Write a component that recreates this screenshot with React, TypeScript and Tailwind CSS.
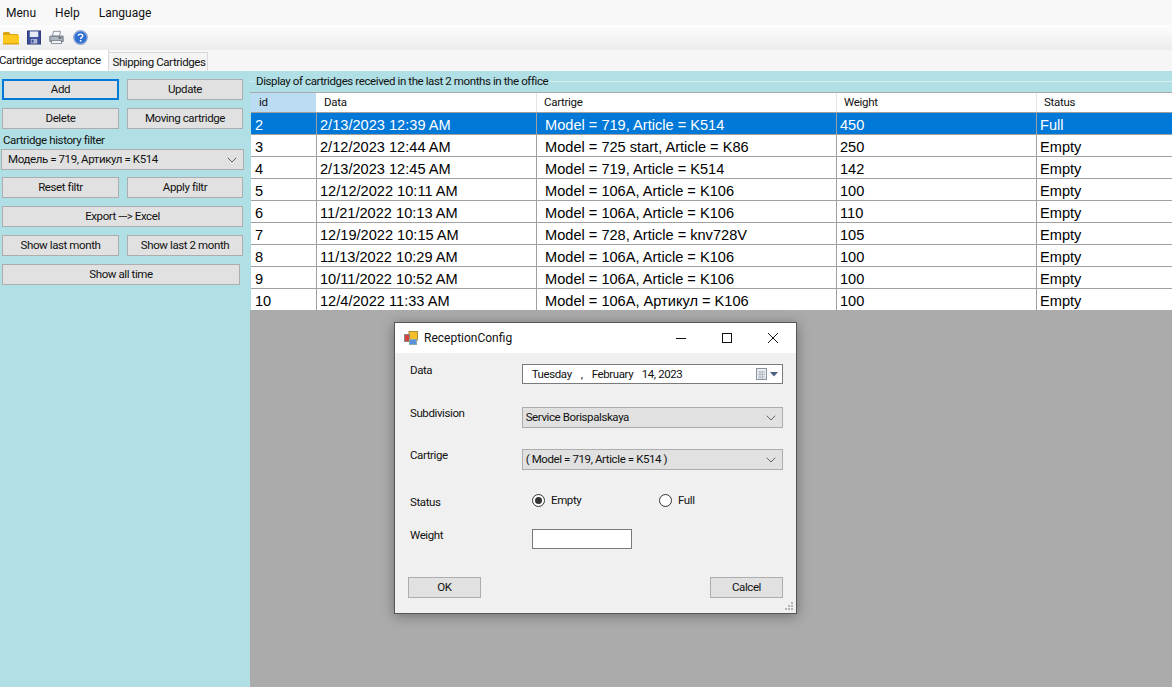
import { ChevronDown } from 'lucide-react';

const SEGOE = 'font-["Roboto","Open_Sans",sans-serif]';

const ROWS = [
  ['2', '2/13/2023 12:39 AM', 'Model = 719, Article = K514', '450', 'Full'],
  ['3', '2/12/2023 12:44 AM', 'Model = 725 start, Article = K86', '250', 'Empty'],
  ['4', '2/13/2023 12:45 AM', 'Model = 719, Article = K514', '142', 'Empty'],
  ['5', '12/12/2022 10:11 AM', 'Model = 106A, Article = K106', '100', 'Empty'],
  ['6', '11/21/2022 10:13 AM', 'Model = 106A, Article = K106', '110', 'Empty'],
  ['7', '12/19/2022 10:15 AM', 'Model = 728, Article = knv728V', '105', 'Empty'],
  ['8', '11/13/2022 10:29 AM', 'Model = 106A, Article = K106', '100', 'Empty'],
  ['9', '10/11/2022 10:52 AM', 'Model = 106A, Article = K106', '100', 'Empty'],
  ['10', '12/4/2022 11:33 AM', 'Model = 106A, Артикул = K106', '100', 'Empty'],
];

const COLUMNS = [
  { name: 'id', width: 'w-[65px]', cell: 'pl-[4px]' },
  { name: 'Data', width: 'w-[220px]', cell: 'pl-[3px]' },
  { name: 'Cartrige', width: 'w-[300px]', cell: 'pl-[8px]' },
  { name: 'Weight', width: 'w-[200px]', cell: 'pl-[3px]' },
  { name: 'Status', width: 'flex-1', cell: 'pl-[3px]' },
];

function WinButton({ label, className = '', focused = false }: { label: string; className?: string; focused?: boolean }) {
  return (
    <button
      className={`h-[21px] pt-px bg-[#e1e1e1] text-[11.5px] tracking-[-0.4px] text-[#111] flex items-center justify-center ${
        focused ? 'border-2 border-[#0078d7]' : 'border border-[#adadad]'
      } ${className}`}
    >
      {label}
    </button>
  );
}

function WinSelect({ value, className = '' }: { value: string; className?: string }) {
  return (
    <div className={`h-[21px] bg-[#e1e1e1] border border-[#adadad] flex items-center justify-between pl-[3px] pr-[3px] text-[11.5px] tracking-[-0.4px] text-[#111] ${className}`}>
      <span className="pt-px">{value}</span>
      <ChevronDown size={16} strokeWidth={1.1} className="text-[#333]" />
    </div>
  );
}

function ToolbarIcons() {
  return (
    <div className="h-[25px] bg-gradient-to-b from-[#fdfdfd] to-[#ececec] flex items-center gap-[8px] pl-[3px]">
      <svg width="16" height="14" viewBox="0 0 16 14">
        <path d="M0 2 L1 1 H6 L7.5 3 H15 V4 H0 Z" fill="#d9a514" />
        <path d="M0 4 H16 V13 H0 Z" fill="#fdc91f" />
        <path d="M0 12 H16 V13.5 H0 Z" fill="#e0a50f" />
      </svg>
      <svg width="14" height="15" viewBox="0 0 15 15">
        <rect x="0.5" y="0.5" width="14" height="14" fill="#3c4f9c" stroke="#2b3674" />
        <rect x="3" y="1" width="9" height="6" fill="#e8ecf5" />
        <rect x="4" y="9" width="7" height="5" fill="#aeb7d4" />
        <rect x="5" y="10" width="2" height="3" fill="#3c4f9c" />
      </svg>
      <svg width="15" height="15" viewBox="0 0 17 15">
        <path d="M5 0.5 H13 L12 6 H4 Z" fill="#f4f6f8" stroke="#7c8796" />
        <path d="M1 6 H16 V12 H1 Z" fill="#aeb6c0" stroke="#5e6874" />
        <rect x="3" y="11" width="11" height="3.5" fill="#eef0f3" stroke="#6b7581" strokeWidth="0.8" />
        <path d="M11 8 H14" stroke="#2f3a46" strokeWidth="1.2" />
      </svg>
      <svg className="ml-px" width="15" height="15" viewBox="0 0 15 15">
        <circle cx="7.5" cy="7.5" r="6.7" fill="#2f6fd0" stroke="#8fa8d6" strokeWidth="1.4" />
        <path d="M5.3 5.8 C5.4 3.6 9.8 3.5 9.8 5.8 C9.8 7.4 7.6 7.3 7.6 9" fill="none" stroke="#fff" strokeWidth="1.4" />
        <rect x="6.8" y="10" width="1.6" height="1.6" fill="#fff" />
      </svg>
    </div>
  );
}

function DataGrid() {
  return (
    <div className="ml-px text-[14.6px] font-['Liberation_Sans',sans-serif]">
      <div className={`flex h-[19px] bg-white text-[11.5px] tracking-[-0.3px] text-[#111] ${SEGOE}`}>
        {COLUMNS.map((col, i) => (
          <div
            key={col.name}
            className={`${col.width} pt-px flex items-center ${i > 1 ? 'pl-[7px] border-l border-[#e4e4e4]' : 'pl-[8px]'} ${i === 0 ? 'bg-[#bcdcf4]' : ''}`}
          >
            {col.name}
          </div>
        ))}
      </div>
      {ROWS.map((row, r) => (
        <div
          key={row[0]}
          className={`flex h-[22px] border-t border-[#a0a0a0] ${r === 0 ? 'bg-[#0078d7] text-white' : 'bg-white text-black'}`}
        >
          {row.map((cell, i) => (
            <div
              key={i}
              className={`${COLUMNS[i].width} ${COLUMNS[i].cell} pt-[4px] flex items-center ${i > 0 ? 'border-l border-[#a0a0a0]' : ''}`}
            >
              {cell}
            </div>
          ))}
        </div>
      ))}
    </div>
  );
}

function RadioDot({ checked }: { checked: boolean }) {
  return (
    <span className="w-[13px] h-[13px] rounded-full border border-[#333] bg-white flex items-center justify-center">
      {checked && <span className="w-[7px] h-[7px] rounded-full bg-[#333]" />}
    </span>
  );
}

function DialogRow({ label, labelClass = '', className = '', children }: { label: string; labelClass?: string; className?: string; children: React.ReactNode }) {
  return (
    <div className={`flex ${className}`}>
      <span className={`w-[112px] ${labelClass}`}>{label}</span>
      {children}
    </div>
  );
}

function ReceptionConfig() {
  return (
    <div className={`absolute left-[394px] top-[322px] w-[403px] h-[292px] bg-[#f0f0f0] border border-[#555] shadow-[0_2px_12px_rgba(0,0,0,0.35)] text-[11.5px] tracking-[-0.4px] text-[#111] flex flex-col ${SEGOE}`}>
      <div className="h-[30px] bg-white flex items-center pl-[9px] shrink-0">
        <svg width="14" height="14" viewBox="0 0 14 14">
          <rect x="5" y="0.5" width="8.5" height="8.5" fill="#f6c02c" stroke="#a98a3c" />
          <rect x="0.5" y="3.5" width="5" height="7" fill="#d9433a" stroke="#888" />
          <rect x="5.5" y="8.5" width="7" height="5" fill="#5d93dd" stroke="#8aa" />
        </svg>
        <span className="ml-[6px] text-[12px] tracking-normal">ReceptionConfig</span>
        <div className="ml-auto flex items-center text-[#111]">
          <span className="w-[46px] flex justify-center">
            <svg width="10" height="10" viewBox="0 0 10 10" stroke="currentColor" shapeRendering="crispEdges"><path d="M0 5.5 H10" /></svg>
          </span>
          <span className="w-[46px] flex justify-center">
            <svg width="10" height="10" viewBox="0 0 10 10" fill="none" stroke="currentColor" shapeRendering="crispEdges"><rect x="0.5" y="0.5" width="9" height="9" /></svg>
          </span>
          <span className="w-[46px] flex justify-center">
            <svg width="10" height="10" viewBox="0 0 10 10" stroke="currentColor" strokeWidth="1"><path d="M0 0 L10 10 M10 0 L0 10" /></svg>
          </span>
        </div>
      </div>
      <div className="relative flex-1 pl-[15px] pr-[13px] flex flex-col">
        <DialogRow label="Data" labelClass="-mt-px" className="mt-[10px]">
          <div className="w-[262px] h-[20px] mt-[1px] bg-white border border-[#7a7a7a] flex items-center pl-[9px] pr-[3px]">
            <span className="w-[49px] pt-px">Tuesday</span>
            <span className="w-[11px] pt-px">,</span>
            <span className="w-[50px] pt-px">February</span>
            <span className="pt-px">14, 2023</span>
            <svg className="ml-auto" width="23" height="13" viewBox="0 0 23 13">
              <rect x="0.5" y="0.5" width="10" height="11" fill="#e8ebf0" stroke="#8b94a3" />
              <path d="M2 4 H9 M2 6.5 H9 M2 9 H9 M4 3 V11 M6.5 3 V11" stroke="#a9b0bb" strokeWidth="0.8" />
              <path d="M14 4 H22 L18 8.5 Z" fill="#4b6184" />
            </svg>
          </div>
        </DialogRow>
        <DialogRow label="Subdivision" labelClass="-mt-[1px]" className="mt-[22px]">
          <WinSelect value="Service Borispalskaya" className="w-[262px] mt-[1px]" />
        </DialogRow>
        <DialogRow label="Cartrige" className="mt-[19px]">
          <WinSelect value="( Model = 719, Article = K514 )" className="w-[262px] mt-[2px]" />
        </DialogRow>
        <DialogRow label="Status" className="mt-[23px] leading-[18px]">
          <label className="flex items-center gap-[6px] w-[127px] ml-[10px] -mt-[2px] h-[18px]">
            <RadioDot checked />
            Empty
          </label>
          <label className="flex items-center gap-[6px] -mt-[2px] h-[18px]">
            <RadioDot checked={false} />
            Full
          </label>
        </DialogRow>
        <DialogRow label="Weight" labelClass="-mt-[2px]" className="mt-[18px]">
          <div className="w-[100px] h-[20px] ml-[10px] bg-white border border-[#7a7a7a]" />
        </DialogRow>
        <div className="flex justify-between mt-[28px] -ml-[2px]">
          <WinButton label="OK" className="w-[73px]" />
          <WinButton label="Calcel" className="w-[73px]" />
        </div>
        <svg className="absolute right-[2px] bottom-[2px]" width="9" height="9" viewBox="0 0 9 9" fill="#b5b5b5">
          <rect x="6" y="0" width="2" height="2" />
          <rect x="3" y="3" width="2" height="2" />
          <rect x="6" y="3" width="2" height="2" />
          <rect x="0" y="6" width="2" height="2" />
          <rect x="3" y="6" width="2" height="2" />
          <rect x="6" y="6" width="2" height="2" />
        </svg>
      </div>
    </div>
  );
}

export default function App() {
  return (
    <div className={`relative w-[1172px] h-[687px] overflow-hidden bg-[#f0f0f0] flex flex-col ${SEGOE}`}>
      <div className="h-[25px] bg-[#f8f8f8] flex items-center pl-[6px] gap-[19px] text-[12px] text-[#111] shrink-0">
        <span>Menu</span>
        <span>Help</span>
        <span>Language</span>
      </div>
      <ToolbarIcons />
      <div className="h-[21px] bg-[#f6f6f6] flex items-end text-[11.5px] tracking-[-0.4px] text-[#111] shrink-0 overflow-hidden">
        <div className="w-[109px] h-[21px] bg-white flex items-center whitespace-nowrap border-r border-[#d9d9d9]">
          <span className="-ml-[1px]">Cartridge acceptance</span>
        </div>
        <div className="w-[99px] h-[19px] pt-px pl-[2px] bg-[#f4f4f4] border-r border-t border-[#d9d9d9] flex items-center justify-center whitespace-nowrap">
          Shipping Cartridges
        </div>
      </div>
      <div className="flex flex-1 min-h-0 bg-[#b0dfe5]">
        <div className="w-[248px] shrink-0 pl-[2px] pt-[8px] flex flex-col gap-[8px]">
          <div className="flex gap-[8px]">
            <WinButton label="Add" focused className="w-[117px]" />
            <WinButton label="Update" className="w-[116px]" />
          </div>
          <div className="flex gap-[8px]">
            <WinButton label="Delete" className="w-[117px]" />
            <WinButton label="Moving cartridge" className="w-[116px]" />
          </div>
          <div className="-mt-[5px] h-[16px] pl-[1px] text-[11.5px] tracking-[-0.4px] leading-[16px] text-[#111]">
            Cartridge history filter
          </div>
          <WinSelect value="Модель = 719, Артикул = K514" className="-mt-[7px] -ml-[1px] w-[243px] !pl-[6px]" />
          <div className="-mt-[1px] flex gap-[8px]">
            <WinButton label="Reset filtr" className="w-[117px]" />
            <WinButton label="Apply filtr" className="w-[116px]" />
          </div>
          <WinButton label="Export ---> Excel" className="w-[241px]" />
          <div className="flex gap-[8px]">
            <WinButton label="Show last month" className="w-[117px]" />
            <WinButton label="Show last 2 month" className="w-[116px]" />
          </div>
          <WinButton label="Show all time" className="w-[238px]" />
        </div>
        <div className="flex-1 min-w-0 flex flex-col ml-[2px]">
          <div className="h-[22px] flex items-center text-[11.5px] tracking-[-0.4px] text-[#111] shrink-0 border-b border-[#a9a9a9]">
            <span className="w-[5px] border-t border-[#d8eef1]" />
            <span className="px-px pt-px whitespace-nowrap">Display of cartridges received in the last 2 months in the office</span>
            <span className="flex-1 border-t border-[#d8eef1]" />
          </div>
          <DataGrid />
          <div className="flex-1 bg-[#ababab]" />
        </div>
      </div>
      <ReceptionConfig />
    </div>
  );
}
